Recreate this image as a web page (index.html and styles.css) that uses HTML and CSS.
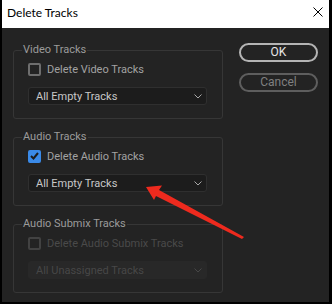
FILE: index.html
```html
<!DOCTYPE html>
<html>
<head>
<meta charset="utf-8">
<link rel="stylesheet" href="styles.css">
</head>
<body>
<div class="window">
  <div class="titlebar">
    <span class="title">Delete Tracks</span>
    <svg class="close" width="10" height="10" viewBox="0 0 10 10"><path d="M0.5 0.5 L9.5 9.5 M9.5 0.5 L0.5 9.5" stroke="#000" stroke-width="1" fill="none"/></svg>
  </div>
  <div class="content">
    <div class="groups">
      <fieldset class="group">
        <legend>Video Tracks</legend>
        <div class="check"><span class="box"></span><span>Delete Video Tracks</span></div>
        <div class="select"><span>All Empty Tracks</span><svg class="chev" width="8" height="5" viewBox="0 0 8 5"><path d="M0.5 0.5 L4 4 L7.5 0.5" stroke="currentColor" fill="none"/></svg></div>
      </fieldset>
      <fieldset class="group">
        <legend>Audio Tracks</legend>
        <div class="check"><span class="box checked"><svg width="9" height="8" viewBox="0 0 9 8"><path d="M1 4 L3.5 6.5 L8 1" stroke="#1c1c1c" stroke-width="2" fill="none"/></svg></span><span>Delete Audio Tracks</span></div>
        <div class="select"><span>All Empty Tracks</span><svg class="chev" width="8" height="5" viewBox="0 0 8 5"><path d="M0.5 0.5 L4 4 L7.5 0.5" stroke="currentColor" fill="none"/></svg></div>
      </fieldset>
      <fieldset class="group">
        <legend>Audio Submix Tracks</legend>
        <div class="check disabled"><span class="box"></span><span>Delete Audio Submix Tracks</span></div>
        <div class="select disabled"><span>All Unassigned Tracks</span><svg class="chev" width="8" height="5" viewBox="0 0 8 5"><path d="M0.5 0.5 L4 4 L7.5 0.5" stroke="currentColor" fill="none"/></svg></div>
      </fieldset>
    </div>
    <div class="buttons">
      <button class="btn ok">OK</button>
      <button class="btn cancel">Cancel</button>
    </div>
  </div>
  <svg class="arrow" width="332" height="304" viewBox="0 0 332 304"><path d="M146 187 L162 185.5 L159 190 L244 237 L242 239 L156 196 L154 200 Z" fill="#ee2a1e"/></svg>
</div>
</body>
</html>
```
FILE: styles.css
```css
html, body {
  margin: 0;
  padding: 0;
  background: #000;
}
body {
  width: 332px;
  height: 304px;
  overflow: hidden;
  font-family: Roboto, "Liberation Sans", sans-serif;
}
.window {
  position: relative;
  box-sizing: border-box;
  width: 332px;
  height: 304px;
  border-left: 2px solid #000;
  border-right: 3px solid #000;
  border-bottom: 2px solid #000;
  background: #232323;
  display: flex;
  flex-direction: column;
}
.titlebar {
  height: 28px;
  flex: none;
  background: #fff;
  display: flex;
  justify-content: space-between;
  align-items: flex-start;
  padding: 0 6px 0 5px;
}
.title {
  font-family: Lato, "Liberation Sans", sans-serif;
  font-size: 12px;
  line-height: 16px;
  margin-top: 5px;
  color: #000;
}
.close {
  margin-top: 7px;
}
.content {
  flex: 1;
  display: flex;
  gap: 16px;
  padding: 14px 11px 0 11px;
}
.groups {
  width: 210px;
  display: flex;
  flex-direction: column;
  gap: 10px;
}
.group {
  margin: 0;
  min-width: 0;
  border: 1px solid #363636;
  border-radius: 3px;
  padding: 4px 14px 13px 14px;
}
.group legend {
  margin-left: -6px;
  padding: 0 1px;
  font-size: 11px;
  line-height: 16px;
  color: #9b9b9b;
}
.check {
  display: flex;
  align-items: center;
  gap: 6px;
  height: 14px;
  font-size: 11px;
  color: #a2a2a2;
}
.box {
  box-sizing: border-box;
  width: 13px;
  height: 13px;
  border: 2px solid #6e6e6e;
  border-radius: 2px;
  display: flex;
  align-items: center;
  justify-content: center;
}
.box.checked {
  background: #3a8ae8;
  border-color: #3a8ae8;
}
.check.disabled {
  color: #4a4a4a;
}
.check.disabled .box {
  border-color: #424242;
}
.select {
  box-sizing: border-box;
  margin-top: 11px;
  width: 179px;
  height: 18px;
  background: #1c1c1c;
  border: 1px solid #2f2f2f;
  border-radius: 3px;
  display: flex;
  align-items: center;
  justify-content: space-between;
  padding: 0 4px 0 7px;
  font-size: 11px;
  color: #c8c8c8;
}
.chev {
  color: #a8a8a8;
}
.select.disabled {
  background: #282828;
  border-color: #282828;
  color: #474747;
}
.select.disabled .chev {
  color: #474747;
}
.buttons {
  display: flex;
  flex-direction: column;
  gap: 11px;
  padding-top: 1px;
}
.btn {
  box-sizing: border-box;
  width: 79px;
  height: 19px;
  border-radius: 10px;
  background: transparent;
  font-family: Roboto, "Liberation Sans", sans-serif;
  font-size: 12px;
  padding: 0;
  line-height: 15px;
}
.btn.ok {
  border: 2px solid #b4b4b4;
  color: #e6e6e6;
}
.btn.cancel {
  border: 2px solid #5e5e5e;
  color: #808080;
}
.arrow {
  position: absolute;
  left: -2px;
  top: 0;
  pointer-events: none;
}
```
